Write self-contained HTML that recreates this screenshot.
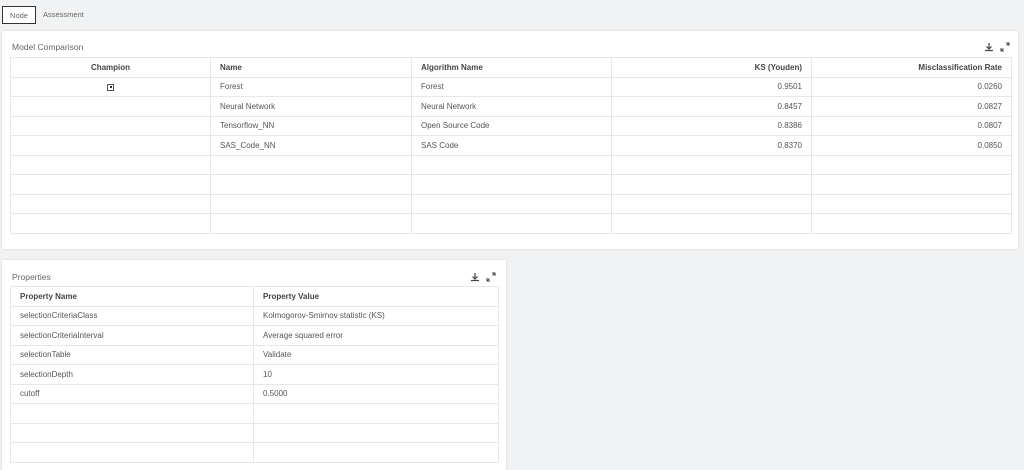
<!DOCTYPE html>
<html><head><style>
*{margin:0;padding:0;box-sizing:border-box}
body{width:1024px;height:468px;background:#f1f2f4;font-family:"Liberation Sans",sans-serif;font-size:8px;color:#555;position:relative;overflow:hidden}
.tab{position:absolute;top:6px;height:18px;line-height:18px;font-size:7.5px;color:#666}
.panel{position:absolute;background:#fff;box-shadow:0 0 2px rgba(0,0,0,.15)}
.title{position:absolute;font-size:8.5px;color:#666}
table{position:absolute;border-collapse:collapse;table-layout:fixed}
td,th{border:1px solid #e6e7ea;height:19.5px;padding:0 9px;font-weight:normal;white-space:nowrap;overflow:hidden}
th{font-weight:bold;color:#444}
.r{text-align:right}.c{text-align:center}
.ic{position:absolute;font-size:9px;color:#555}
</style></head><body>
<div class="tab" style="left:2px;width:34px;border:1px solid #333;background:#fff;text-align:center">Node</div>
<div class="tab" style="left:43px">Assessment</div>

<div class="panel" style="left:2px;top:31px;width:1016px;height:218px">
<div class="title" style="left:10px;top:11px">Model Comparison</div>
<svg class="ic" style="left:982px;top:11px" width="10" height="10" viewBox="0 0 10 10"><path d="M5 1v6M2.5 4.5L5 7l2.5-2.5M1 8.5h8" stroke="#444" fill="none" stroke-width="1.2"/></svg>
<svg class="ic" style="left:998px;top:11px" width="10" height="10" viewBox="0 0 10 10"><path d="M6 1h3v3M9 1L6.5 3.5M4 9H1V6M1 9l2.5-2.5" stroke="#444" fill="none" stroke-width="1"/></svg>
<table style="left:8px;top:26px;width:1001px">
<colgroup><col style="width:200px"><col style="width:201px"><col style="width:200px"><col style="width:200px"><col style="width:200px"></colgroup>
<tr><th class="c">Champion</th><th style="text-align:left">Name</th><th style="text-align:left">Algorithm Name</th><th class="r">KS (Youden)</th><th class="r">Misclassification Rate</th></tr>
<tr><td class="c"><span style="display:inline-block;width:7px;height:7px;border:1px solid #555;position:relative;vertical-align:middle"><span style="position:absolute;left:1.5px;top:1.5px;width:2px;height:2px;background:#333"></span></span></td><td>Forest</td><td>Forest</td><td class="r">0.9501</td><td class="r">0.0260</td></tr>
<tr><td></td><td>Neural Network</td><td>Neural Network</td><td class="r">0.8457</td><td class="r">0.0827</td></tr>
<tr><td></td><td>Tensorflow_NN</td><td>Open Source Code</td><td class="r">0.8386</td><td class="r">0.0807</td></tr>
<tr><td></td><td>SAS_Code_NN</td><td>SAS Code</td><td class="r">0.8370</td><td class="r">0.0850</td></tr>
<tr><td></td><td></td><td></td><td></td><td></td></tr>
<tr><td></td><td></td><td></td><td></td><td></td></tr>
<tr><td></td><td></td><td></td><td></td><td></td></tr>
<tr><td></td><td></td><td></td><td></td><td></td></tr>
</table>
</div>

<div class="panel" style="left:2px;top:260px;width:504px;height:210px">
<div class="title" style="left:10px;top:12px">Properties</div>
<svg class="ic" style="left:468px;top:12px" width="10" height="10" viewBox="0 0 10 10"><path d="M5 1v6M2.5 4.5L5 7l2.5-2.5M1 8.5h8" stroke="#444" fill="none" stroke-width="1.2"/></svg>
<svg class="ic" style="left:484px;top:12px" width="10" height="10" viewBox="0 0 10 10"><path d="M6 1h3v3M9 1L6.5 3.5M4 9H1V6M1 9l2.5-2.5" stroke="#444" fill="none" stroke-width="1"/></svg>
<table style="left:8px;top:26px;width:488px">
<colgroup><col style="width:243px"><col style="width:245px"></colgroup>
<tr><th style="text-align:left">Property Name</th><th style="text-align:left">Property Value</th></tr>
<tr><td>selectionCriteriaClass</td><td>Kolmogorov-Smirnov statistic (KS)</td></tr>
<tr><td>selectionCriteriaInterval</td><td>Average squared error</td></tr>
<tr><td>selectionTable</td><td>Validate</td></tr>
<tr><td>selectionDepth</td><td>10</td></tr>
<tr><td>cutoff</td><td>0.5000</td></tr>
<tr><td></td><td></td></tr>
<tr><td></td><td></td></tr>
<tr><td></td><td></td></tr>
</table>
</div>
</body></html>
